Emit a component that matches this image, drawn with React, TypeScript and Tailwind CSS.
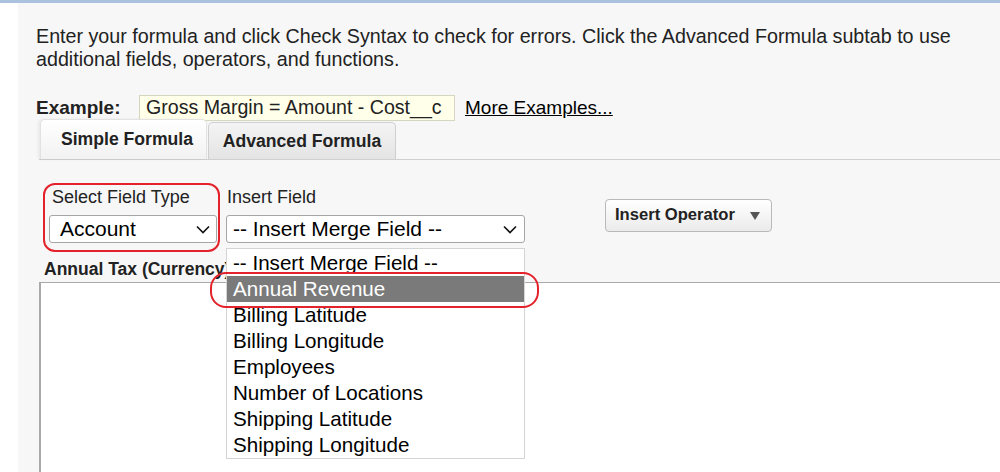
const items = [
  "-- Insert Merge Field --",
  "Annual Revenue",
  "Billing Latitude",
  "Billing Longitude",
  "Employees",
  "Number of Locations",
  "Shipping Latitude",
  "Shipping Longitude",
];

function Chevron() {
  return (
    <svg width="14" height="9" viewBox="0 0 14 9" className="shrink-0">
      <polyline points="1,1.5 7,7.5 13,1.5" fill="none" stroke="#111" strokeWidth="1.6" />
    </svg>
  );
}

export default function App() {
  return (
    <div className="w-[1000px] h-[472px] overflow-hidden bg-white font-['Liberation_Sans',Arial,sans-serif] text-[#222]">
      <div className="h-[3px] bg-[#aac2dd]" />
      <div className="flex h-[469px]">
        <div className="w-[18px] bg-white" />
        <div className="relative flex-1 bg-[#f7f7f7] pl-[18px]">
          <p className="mt-[22px] max-w-[935px] text-[19.7px] leading-[23px]">
            Enter your formula and click Check Syntax to check for errors. Click the Advanced Formula subtab to use
            additional fields, operators, and functions.
          </p>

          <div className="mt-[24px] flex h-[26px] items-center">
            <span className="w-[103px] text-[19px] font-bold">Example:</span>
            <span className="flex h-[26px] w-[316px] items-center border border-[#d6d6c0] bg-[#ffffea] px-[6px] text-[19.6px]">
              Gross Margin = Amount - Cost__c
            </span>
            <a className="ml-[10px] text-[19px] text-black underline">More Examples...</a>
          </div>

          <div className="-mt-[2px] ml-[3px] flex items-end border-b border-[#d0d0d0]">
            <div className="ml-[1px] flex h-[40px] w-[167px] items-center rounded-t-[5px] border border-b-0 border-[#e2e2e2] bg-gradient-to-b from-white to-[#f2f2f2] pl-[20px] text-[17.6px] font-bold shadow-[-2px_0_3px_rgba(0,0,0,0.06)]">
              Simple Formula
            </div>
            <div className="ml-[1px] flex h-[37px] w-[188px] items-center justify-center rounded-t-[5px] border border-b-0 border-[#cfcfcf] bg-gradient-to-b from-[#f4f4f4] to-[#e4e4e4] text-[17.6px] font-bold">
              Advanced Formula
            </div>
          </div>

          <div className="mt-[27px] flex">
            <div className="ml-[13px] w-[168px]">
              <div className="h-[20px] pl-[3px] text-[18px] leading-[20px]">Select Field Type</div>
              <div className="mt-[8px] flex h-[28px] items-center justify-between rounded-[3px] border border-[#a6a6a6] bg-white pl-[10px] pr-[6px] text-[21px] text-black">
                <span>Account</span>
                <Chevron />
              </div>
            </div>
            <div className="ml-[9px] w-[299px]">
              <div className="h-[20px] pl-[1px] text-[18px] leading-[20px]">Insert Field</div>
              <div className="mt-[8px] flex h-[28px] items-center justify-between rounded-[3px] border border-[#a6a6a6] bg-white pl-[6px] pr-[7px] text-[21px] text-black">
                <span>-- Insert Merge Field --</span>
                <Chevron />
              </div>
            </div>
            <div className="ml-[80px] mt-[12px] flex h-[33px] w-[167px] items-center justify-between rounded-[4px] border border-[#b9b9b9] bg-gradient-to-b from-white to-[#ebebeb] pl-[9px] pr-[11px] text-[16.6px] font-bold">
              <span>Insert Operator</span>
              <span className="h-0 w-0 border-l-[5px] border-r-[5px] border-t-[8px] border-l-transparent border-r-transparent border-t-[#555]" />
            </div>
          </div>

          <div className="ml-[8px] mt-[16px] h-[20px] text-[17.5px] font-bold leading-[20px]">Annual Tax (Currency)</div>
          <div className="ml-[3px] mt-[3px] h-[200px] border-l-2 border-t border-[#a9a9a9] bg-white" />

          <div className="absolute left-[208px] top-[245px] w-[299px] border border-[#d4d4d4] bg-white pt-[1px] text-[20.6px] text-black">
            {items.map((it, i) => (
              <div
                key={it}
                className={`h-[26px] pl-[6px] leading-[26px] ${i === 1 ? "bg-[#7a7a7a] text-white" : ""}`}
              >
                {it}
              </div>
            ))}
          </div>

          <div className="absolute left-[25px] top-[180px] h-[69px] w-[177px] rounded-[12px] border-2 border-[#e3222b]" />
          <div className="absolute left-[192px] top-[269px] h-[36px] w-[329px] rounded-[16px] border-2 border-[#e3222b]" />
        </div>
      </div>
    </div>
  );
}
